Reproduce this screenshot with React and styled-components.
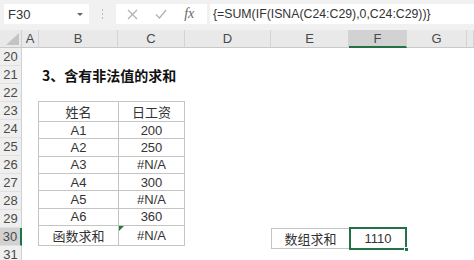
import React from "react";
import styled, { createGlobalStyle } from "styled-components";

const Global = createGlobalStyle`
  html, body { margin: 0; padding: 0; background: #fff; }
  body { font-family: "Liberation Sans", "Noto Sans CJK SC", sans-serif; }
`;

const Frame = styled.div`
  width: 474px;
  height: 260px;
  overflow: hidden;
  background: #fff;
  display: flex;
  flex-direction: column;
`;

const FormulaBar = styled.div`
  height: 30px;
  flex: none;
  background: #f1f1f1;
  display: flex;
  align-items: flex-start;
  padding: 4px 0 0 4px;
  box-sizing: border-box;
`;

const NameBox = styled.div`
  width: 85px;
  height: 20px;
  background: #fff;
  display: flex;
  align-items: center;
  justify-content: space-between;
  padding: 0 6px 0 4px;
  box-sizing: border-box;
  font-size: 13px;
  color: #333;
`;

const Caret = styled.span`
  width: 0;
  height: 0;
  border-left: 3px solid transparent;
  border-right: 3px solid transparent;
  border-top: 3px solid #666;
`;

const Dots = styled.div`
  width: 27px;
  height: 20px;
  display: flex;
  flex-direction: column;
  align-items: center;
  justify-content: center;
  gap: 2px;
  span {
    width: 1px;
    height: 2px;
    background: #bbb;
  }
`;

const Buttons = styled.div`
  width: 91px;
  height: 20px;
  background: #fff;
  display: flex;
  align-items: center;
  justify-content: space-around;
  padding: 0 4px 0 2px;
  box-sizing: border-box;
  margin-right: 3px;
`;

const Fx = styled.span`
  font-family: "Liberation Serif", serif;
  font-style: italic;
  font-size: 14px;
  color: #666;
`;

const FormulaInput = styled.div`
  flex: 1;
  height: 20px;
  background: #fff;
  display: flex;
  align-items: center;
  padding-left: 3px;
  font-size: 12.3px;
  color: #333;
  white-space: nowrap;
`;

const Sheet = styled.div`
  display: grid;
  grid-template-columns: 22px 17px 79px 67px 86px 78px 58px 60px 1fr;
  grid-template-rows: 18px repeat(12, 18px);
  font-size: 13px;
  color: #333;
`;

const Corner = styled.div`
  background: #e9e9e9;
  border-right: 1px solid #d0d0d0;
  border-bottom: 1px solid #c8c8c8;
  position: relative;
  &::after {
    content: "";
    position: absolute;
    right: 2px;
    bottom: 2px;
    width: 0;
    height: 0;
    border-left: 13px solid transparent;
    border-bottom: 12px solid #c4c4c4;
  }
`;

const ColHeader = styled.div`
  background: ${(p) => (p.$active ? "#d2d2d2" : "#e9e9e9")};
  border-right: 1px solid #d4d4d4;
  border-bottom: ${(p) => (p.$active ? "2px solid #217346" : "1px solid #c8c8c8")};
  display: flex;
  align-items: center;
  justify-content: center;
  color: #4a4a4a;
  font-size: 13px;
  box-sizing: border-box;
`;

const RowHeader = styled.div`
  grid-column: 1;
  background: ${(p) => (p.$active ? "#d2d2d2" : "#efefef")};
  border-right: ${(p) => (p.$active ? "2px solid #217346" : "1px solid #d0d0d0")};
  border-bottom: 1px solid #e0e0e0;
  display: flex;
  align-items: center;
  justify-content: center;
  color: #4a4a4a;
  font-size: 13px;
  box-sizing: border-box;
`;

const Title = styled.div`
  grid-column: 3 / 6;
  grid-row: 3;
  display: flex;
  align-items: center;
  padding-left: 3px;
  font-family: "Noto Sans CJK SC", sans-serif;
  font-weight: 700;
  font-size: 14px;
  color: #111;
  white-space: nowrap;
`;

const DataTable = styled.div`
  grid-column: 3 / 5;
  grid-row: 5 / 13;
  display: grid;
  grid-template-columns: 79px 1fr;
  grid-auto-rows: 1fr;
  gap: 1px;
  background: #c4c4c4;
  border: 1px solid #c4c4c4;
  margin-left: -1px;
  margin-top: -1px;
`;

const Cell = styled.div`
  background: #fff;
  display: flex;
  align-items: center;
  justify-content: center;
  font-size: 13px;
  color: #333;
  position: relative;
  ${(p) =>
    p.$error &&
    `&::before {
      content: "";
      position: absolute;
      left: 0;
      top: 0;
      border-top: 5px solid #1e7a3c;
      border-right: 5px solid transparent;
    }`}
`;

const Summary = styled.div`
  grid-column: 6 / 8;
  grid-row: 12;
  display: grid;
  grid-template-columns: 78px 58px;
`;

const SumLabel = styled.div`
  border: 1px solid #c4c4c4;
  border-right: none;
  display: flex;
  align-items: center;
  justify-content: center;
  font-size: 13px;
  color: #333;
`;

const SumValue = styled.div`
  border: 2px solid #217346;
  display: flex;
  align-items: center;
  justify-content: center;
  font-size: 13px;
  color: #333;
  position: relative;
  margin-top: -1px;
  margin-bottom: -1px;
  &::after {
    content: "";
    position: absolute;
    right: -4px;
    bottom: -4px;
    width: 5px;
    height: 5px;
    background: #217346;
    border: 1px solid #fff;
    box-sizing: border-box;
  }
`;

const cols = ["A", "B", "C", "D", "E", "F", "G", ""];
const rows = [20, 21, 22, 23, 24, 25, 26, 27, 28, 29, 30, 31];
const data = [
  ["姓名", "日工资"],
  ["A1", "200"],
  ["A2", "250"],
  ["A3", "#N/A"],
  ["A4", "300"],
  ["A5", "#N/A"],
  ["A6", "360"],
  ["函数求和", "#N/A"],
];

export default function App() {
  return (
    <Frame>
      <Global />
      <FormulaBar>
        <NameBox>
          F30
          <Caret />
        </NameBox>
        <Dots>
          <span />
          <span />
          <span />
        </Dots>
        <Buttons>
          <svg width="11" height="11" viewBox="0 0 11 11">
            <path d="M1 1 L10 10 M10 1 L1 10" stroke="#b0b0b0" strokeWidth="1.2" fill="none" />
          </svg>
          <svg width="12" height="10" viewBox="0 0 12 10">
            <path d="M1 5.5 L4.5 9 L11 1" stroke="#b0b0b0" strokeWidth="1.2" fill="none" />
          </svg>
          <Fx>fx</Fx>
        </Buttons>
        <FormulaInput>{"{=SUM(IF(ISNA(C24:C29),0,C24:C29))}"}</FormulaInput>
      </FormulaBar>
      <Sheet>
        <Corner />
        {cols.map((c, i) => (
          <ColHeader key={i} $active={c === "F"}>
            {c}
          </ColHeader>
        ))}
        {rows.map((r, i) => (
          <RowHeader key={r} $active={r === 30} style={{ gridRow: i + 2 }}>
            {r}
          </RowHeader>
        ))}
        <Title>3、含有非法值的求和</Title>
        <DataTable>
          {data.map((row, ri) =>
            row.map((v, ci) => (
              <Cell key={`${ri}-${ci}`} $error={ri === 7 && ci === 1}>
                {v}
              </Cell>
            ))
          )}
        </DataTable>
        <Summary>
          <SumLabel>数组求和</SumLabel>
          <SumValue>1110</SumValue>
        </Summary>
      </Sheet>
    </Frame>
  );
}
